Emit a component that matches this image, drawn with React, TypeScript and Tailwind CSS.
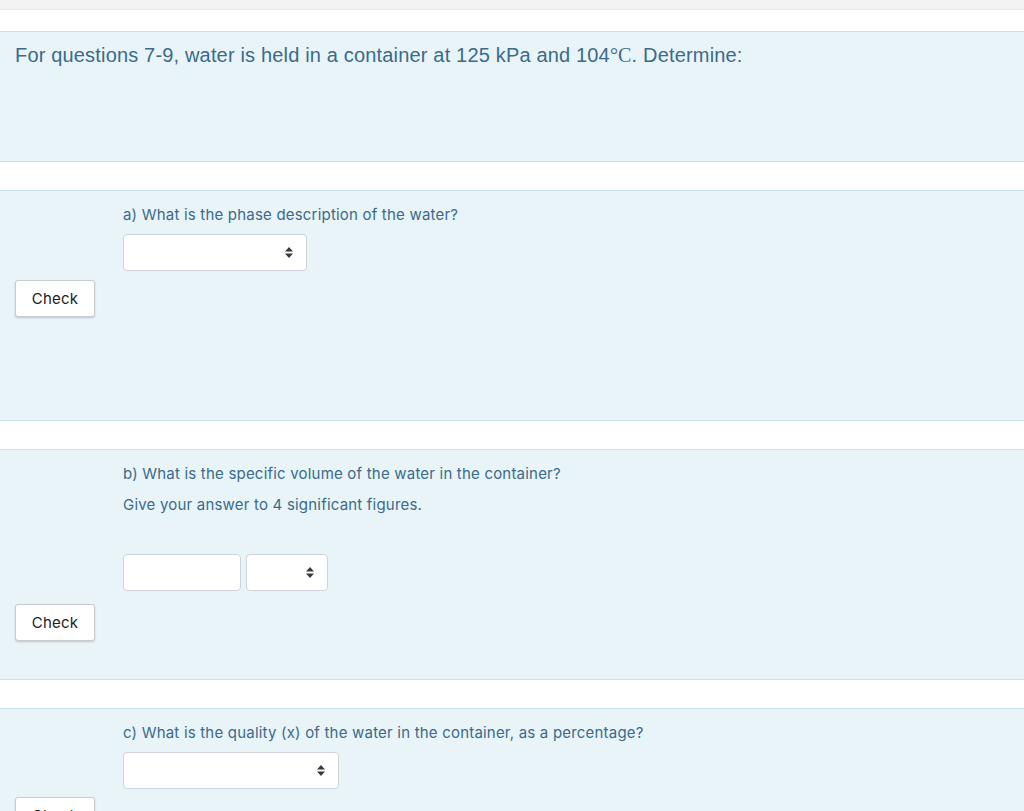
import React from "react";

const qFont = { fontFamily: "Inter, 'Noto Sans', sans-serif" };

function Arrows() {
  return (
    <svg width="8" height="11" viewBox="0 0 8 11" className="shrink-0">
      <path d="M4 0 L8 4.5 L0 4.5 Z" fill="#343a40" />
      <path d="M4 11 L8 6.5 L0 6.5 Z" fill="#343a40" />
    </svg>
  );
}

function Select({ w }: { w: string }) {
  return (
    <div className={`${w} h-[37px] bg-white border border-[#ced4da] rounded-[4px] flex items-center justify-end pr-[13px]`}>
      <Arrows />
    </div>
  );
}

function CheckBtn() {
  return (
    <button
      className="w-[80px] h-[37px] bg-white border border-[#c9cdd1] rounded-[3px] shadow-[0_1px_2px_rgba(0,0,0,0.18)] text-[15px] tracking-[0.2px] text-[#1d2125] flex items-center justify-center pt-[1px]"
      style={qFont}
    >
      Check
    </button>
  );
}

function Gap() {
  return <div className="h-[28px] bg-white" />;
}

const qText = "pl-[108px] text-[15px] tracking-[0.2px] text-[#3b6a8c] leading-[22px]";

export default function App() {
  return (
    <div className="w-[1024px] h-[811px] overflow-hidden bg-white">
      <div className="h-[10px] bg-[#f3f3f3] border-b border-[#e6e6e6]" />
      <div className="h-[21px] bg-white" />
      <div className="h-[131px] bg-[#e8f4f8] border-y border-[#c7e2ec] px-[15px] pt-[9px]">
        <p className="text-[20px] tracking-[0.17px] text-[#3b6a8c] leading-[28px]" style={{ fontFamily: "'Liberation Sans', Arial, sans-serif" }}>
          For questions 7-9, water is held in a container at 125 kPa and 104
          <span style={{ fontFamily: "'Liberation Serif', serif" }}>°C</span>. Determine:
        </p>
      </div>
      <Gap />
      <div className="h-[231px] bg-[#e8f4f8] border-y border-[#c7e2ec] px-[15px] pt-[13px]" style={qFont}>
        <div className={qText}>a) What is the phase description of the water?</div>
        <div className="pl-[108px] mt-[8px]">
          <Select w="w-[184px]" />
        </div>
        <div className="mt-[9px]">
          <CheckBtn />
        </div>
      </div>
      <Gap />
      <div className="h-[231px] bg-[#e8f4f8] border-y border-[#c7e2ec] px-[15px] pt-[13px]" style={qFont}>
        <div className={qText}>b) What is the specific volume of the water in the container?</div>
        <div className={`${qText} mt-[9px]`}>Give your answer to 4 significant figures.</div>
        <div className="pl-[108px] mt-[38px] flex gap-[5px]">
          <div className="w-[118px] h-[37px] bg-white border border-[#ced4da] rounded-[4px]" />
          <Select w="w-[82px]" />
        </div>
        <div className="mt-[13px]">
          <CheckBtn />
        </div>
      </div>
      <Gap />
      <div className="h-[120px] bg-[#e8f4f8] border-t border-[#c7e2ec] px-[15px] pt-[13px]" style={qFont}>
        <div className={qText}>c) What is the quality (x) of the water in the container, as a percentage?</div>
        <div className="pl-[108px] mt-[8px]">
          <Select w="w-[216px]" />
        </div>
        <div className="mt-[8px]">
          <CheckBtn />
        </div>
      </div>
    </div>
  );
}
